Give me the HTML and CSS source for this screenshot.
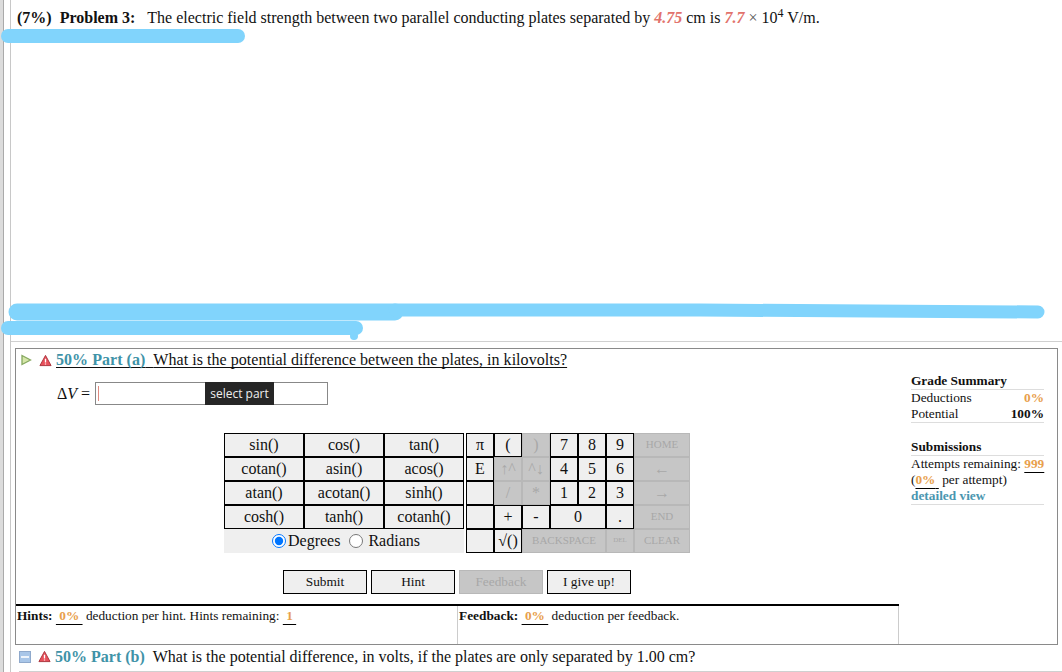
FILE: index.html
```html
<!DOCTYPE html>
<html lang="en">
<head>
<meta charset="utf-8">
<title>Problem 3</title>
<link rel="stylesheet" href="styles.css">
</head>
<body>
<div class="page">
  <div class="rail"></div>
  <main class="content">
    <section class="problem">
      <p class="statement"><b>(7%)</b><span class="sp1"></span><b>Problem 3:</b><span class="sp"></span>The electric field strength between two parallel conducting plates separated by <i class="given">4.75</i> cm is <i class="given">7.7</i> <span class="times">×</span> 10<sup>4</sup> V/m.</p>
    </section>
    <section class="part-box">
      <div class="part-main">
        <div class="part-body">
          <h2 class="part-head">
            <svg class="ico-play" viewBox="0 0 12 12"><path d="M2 1.5 L10.5 6 L2 10.5 Z" fill="#d5e6a8" stroke="#86a860" stroke-width="1.3"/></svg>
            <svg class="ico-warn" viewBox="0 0 14 14"><path d="M7 1.5 L13 12.5 H1 Z" fill="#e8505b" stroke="#a83038" stroke-width="1"/><path d="M7 5 V9.2 M7 10.2 V11.4" stroke="#fff" stroke-width="1.4"/></svg>
            <span class="part-line"><span class="part-label">50% Part (a)</span><span class="gap">&nbsp;</span>What is the potential difference between the plates, in kilovolts?</span>
          </h2>
          <div class="answer">
            <span class="var">Δ<i>V</i> =</span>
            <div class="input"><span class="caret"></span><span class="tip">select part</span></div>
          </div>
          <div class="calc">
            <div class="fn-side">
              <div class="fns">
                <span>sin()</span><span>cos()</span><span>tan()</span>
                <span>cotan()</span><span>asin()</span><span>acos()</span>
                <span>atan()</span><span>acotan()</span><span>sinh()</span>
                <span>cosh()</span><span>tanh()</span><span>cotanh()</span>
              </div>
              <div class="angle">
                <input type="radio" name="ang" checked><label>Degrees</label>
                <input type="radio" name="ang" class="r2"><label>Radians</label>
              </div>
            </div>
            <div class="keys">
              <span>π</span><span>(</span><span class="off">)</span><span>7</span><span>8</span><span>9</span><span class="off wide s11">HOME</span>
              <span>E</span><span class="off">↑^</span><span class="off">^↓</span><span>4</span><span>5</span><span>6</span><span class="off wide">←</span>
              <span></span><span class="off">/</span><span class="off">*</span><span>1</span><span>2</span><span>3</span><span class="off wide">→</span>
              <span></span><span>+</span><span>-</span><span class="two">0</span><span>.</span><span class="off wide s11">END</span>
              <span></span><span>√()</span><span class="off three s11">BACKSPACE</span><span class="off s7">DEL</span><span class="off wide s11">CLEAR</span>
            </div>
          </div>
          <div class="actions">
            <button type="button">Submit</button>
            <button type="button">Hint</button>
            <button type="button" class="dis">Feedback</button>
            <button type="button">I give up!</button>
          </div>
        </div>
        <div class="hints">
          <div class="hint-cell"><b>Hints:</b> <u><b class="org">&nbsp;0%&nbsp;</b></u> deduction per hint. Hints remaining: <u><b class="org">&nbsp;1&nbsp;</b></u></div>
          <div class="fb-cell"><b>Feedback:</b> <u><b class="org">&nbsp;0%&nbsp;</b></u> deduction per feedback.</div>
        </div>
      </div>
      <aside class="summary">
        <h3>Grade Summary</h3>
        <div class="row"><span>Deductions</span><b class="org">0%</b></div>
        <div class="row last"><span>Potential</span><b>100%</b></div>
        <h3 class="sub">Submissions</h3>
        <div class="attempts">Attempts remaining: <u><b class="org">999</b></u><br>(<u><b class="org">0%</b>&nbsp;</u> per attempt)<br><b class="link">detailed view</b></div>
      </aside>
    </section>
    <section class="part-b">
      <svg class="ico-min" viewBox="0 0 12 12"><rect x="0.5" y="0.5" width="11" height="11" fill="#a9c6e8" stroke="#8fa9cc"/><rect x="2" y="5" width="8" height="2" fill="#eef4fb"/></svg>
      <svg class="ico-warn" viewBox="0 0 14 14"><path d="M7 1.5 L13 12.5 H1 Z" fill="#e8505b" stroke="#a83038" stroke-width="1"/><path d="M7 5 V9.2 M7 10.2 V11.4" stroke="#fff" stroke-width="1.4"/></svg>
      <span class="part-label">50% Part (b)</span><span class="q">What is the potential difference, in volts, if the plates are only separated by 1.00 cm?</span>
    </section>
  </main>
  <svg class="scribble" viewBox="0 0 1062 672" aria-hidden="true">
    <path d="M8 36 H238" stroke="#81d4fc" stroke-width="14" stroke-linecap="round" fill="none"/>
    <path d="M17 312 H395" stroke="#81d4fc" stroke-width="17" stroke-linecap="round" fill="none"/>
    <path d="M395 310 L700 310 L1038 312" stroke="#81d4fc" stroke-width="13" stroke-linecap="round" fill="none"/>
    <path d="M8 328 H356" stroke="#81d4fc" stroke-width="14" stroke-linecap="round" fill="none"/>
    <circle cx="354" cy="336" r="4" fill="#81d4fc"/>
  </svg>
</div>
</body>
</html>
```

FILE: styles.css
```css
* { box-sizing: border-box; }
html, body { margin: 0; height: 100%; overflow: hidden; background: #fff; }
body { font-family: "Liberation Serif", "Times New Roman", serif; color: #111; }
u { text-decoration-color: #000; text-underline-offset: 4px; text-decoration-skip-ink: none; }

.page { position: relative; display: flex; width: 1062px; height: 672px; }
.rail { width: 11px; flex: none; border-left: 3px solid #dcdcdc; border-right: 1px solid #c8c8c8; box-shadow: inset 1px 0 0 #aaa; }
.content { flex: 1; display: flex; flex-direction: column; min-width: 0; }

.problem { height: 342px; flex: none; border-bottom: 1px solid #d0d0d0; padding: 8px 0 0 6px; }
.statement { margin: 0; font-size: 16px; line-height: 20px; white-space: nowrap; }
.statement sup { font-size: 12px; line-height: 0; }
.sp1 { display: inline-block; width: 8px; }
.sp { display: inline-block; width: 12px; }
.given { color: #e2736c; font-weight: bold; }
.times { color: #555; }

.part-box { margin: 6px 4px 0 4px; height: 297px; flex: none; border: 1px solid #8a8a8a; display: flex; }
.part-main { width: 883px; flex: none; display: flex; flex-direction: column; }
.part-body { height: 255px; flex: none; }
.part-head { margin: 0; height: 22px; display: flex; align-items: center; padding: 0 0 0 4px; font-size: 16px; font-weight: normal; white-space: nowrap; }
.ico-play { width: 12px; height: 12px; flex: none; }
.ico-warn { width: 13px; height: 13px; flex: none; margin-left: 7px; }
.part-line { margin-left: 4px; text-decoration: underline; text-underline-offset: 2px; text-decoration-skip-ink: none; letter-spacing: .04px; }
.part-label { color: #3f93a8; font-weight: bold; }
.gap { letter-spacing: 4px; }

.answer { display: flex; align-items: center; margin: 11px 0 0 41px; height: 23px; }
.var { width: 38px; font-size: 16px; flex: none; }
.input { position: relative; width: 233px; height: 23px; border: 1px solid #888; }
.caret { position: absolute; left: 2px; top: 3px; width: 1px; height: 15px; background: #e08a80; }
.tip { position: absolute; left: 109px; top: -1px; width: 69px; height: 23px; background: #262626; color: #eee; font: 12px/23px "Open Sans", sans-serif; text-align: center; }

.calc { display: flex; margin: 28px 0 0 208px; }
.fn-side { width: 240px; flex: none; margin-right: 2px; height: 120px; }
.fns { display: grid; grid-template-columns: repeat(3, 80px); grid-auto-rows: 24px; }
.fns span { border: 1.5px solid #000; background: #efefef; text-align: center; font-size: 16px; line-height: 21px; }
.angle { display: flex; align-items: center; height: 24px; font-size: 16px; padding-left: 48px; background: #efefef; }
.angle input { margin: 0 2px 0 0; width: 14px; height: 14px; }
.angle .r2 { margin-left: 9px; margin-right: 5px; }
.keys { display: grid; grid-template-columns: repeat(6, 28px) 56px; grid-auto-rows: 24px; }
.keys span { border: 1.5px solid #000; background: #efefef; text-align: center; font-size: 16px; line-height: 21px; }
.keys .off { background: #c6c6c6; color: #a8a8a8; border-color: #b8b8b8; }
.keys .two { grid-column: span 2; }
.keys .three { grid-column: span 3; }
.keys .s11 { font-size: 11px; }
.keys .s7 { font-size: 7px; }

.actions { display: flex; gap: 4px; margin: 17px 0 0 267px; }
.actions button { width: 84px; height: 24px; padding: 0; margin: 0; background: #efefef; border: 1px solid #000; font: 13.33px "Liberation Serif", serif; color: #111; }
.actions .dis { background: #c6c6c6; color: #a8a8a8; border-color: #b8b8b8; }

.hints { flex: 1; display: flex; border-top: 2px solid #000; font-size: 13.33px; line-height: 18px; }
.hint-cell { width: 441px; padding: 1px 0 0 1px; }
.fb-cell { flex: 1; padding: 1px 0 0 1px; border-left: 1px solid #ccc; border-right: 1px solid #ccc; }
.org { color: #e8a04c; }

.summary { flex: 1; padding: 24px 13px 0 12px; font-size: 13.33px; line-height: 16px; min-width: 0; }
.summary h3 { margin: 0; font-size: 13.33px; line-height: 16px; border-bottom: 1px solid #ddd; }
.summary .sub { margin-top: 16px; }
.row { display: flex; justify-content: space-between; }
.row.last { border-bottom: 1px solid #ddd; }
.attempts { border-bottom: 1px solid #ddd; white-space: nowrap; }
.link { color: #4a96b0; }

.part-b { flex: 1; display: flex; align-items: center; margin-left: 8px; padding-bottom: 3px; border-bottom: 1px solid #d0d0d0; font-size: 16px; white-space: nowrap; }
.ico-min { width: 12px; height: 12px; flex: none; }
.part-b .ico-warn { margin-left: 7px; }
.part-b .part-label { margin-left: 4px; }
.q { margin-left: 8px; }

.scribble { position: absolute; left: 0; top: 0; width: 1062px; height: 672px; pointer-events: none; }
```
